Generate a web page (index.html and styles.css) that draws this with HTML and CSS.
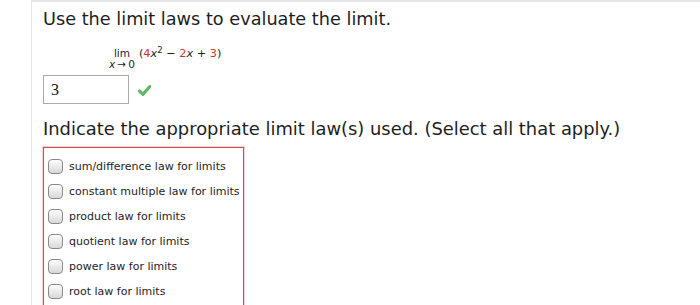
FILE: index.html
```html
<!DOCTYPE html>
<html>
<head>
<meta charset="utf-8">
<link rel="stylesheet" href="styles.css">
</head>
<body>
<div class="page">
  <div class="gutter"></div>
  <div class="main">
    <h1 class="q">Use the limit laws to evaluate the limit.</h1>
    <div class="expr">
      <div class="lim">
        <span class="limword">lim</span>
        <span class="limsub"><i>x</i>&thinsp;→&thinsp;0</span>
      </div>
      <div class="body">(<span class="red">4</span><i>x</i><sup>2</sup> &minus; <span class="red">2</span><i>x</i> + <span class="red">3</span>)</div>
    </div>
    <div class="answer">
      <div class="inp">3</div>
      <svg class="check" width="13" height="11" viewBox="0 0 13 11"><path d="M1.5 6 L5 9.3 L11.8 1.5" fill="none" stroke="#62b862" stroke-width="3.2" stroke-linejoin="round" stroke-linecap="round"/></svg>
    </div>
    <h2 class="q2">Indicate the appropriate limit law(s) used. (Select all that apply.)</h2>
    <div class="opts">
      <div class="opt"><span class="cb"></span><span>sum/difference law for limits</span></div>
      <div class="opt"><span class="cb"></span><span>constant multiple law for limits</span></div>
      <div class="opt"><span class="cb"></span><span>product law for limits</span></div>
      <div class="opt"><span class="cb"></span><span>quotient law for limits</span></div>
      <div class="opt"><span class="cb"></span><span>power law for limits</span></div>
      <div class="opt"><span class="cb"></span><span>root law for limits</span></div>
    </div>
  </div>
</div>
</body>
</html>
```

FILE: styles.css
```css
html, body { margin: 0; padding: 0; background: #fff; }
body { font-family: "DejaVu Sans", Verdana, sans-serif; color: #1e1e1e; width: 700px; height: 305px; overflow: hidden; }
.page { display: flex; height: 305px; }
.gutter { width: 31px; flex: none; border-right: 1px solid #e6e6e6; }
.main { flex: 1; border-top: 2px solid #e6e6e6; padding-left: 11px; }
.q { font-size: 17.7px; font-weight: normal; margin: 6px 0 0 0; line-height: 22px; }
.expr { display: flex; align-items: flex-start; margin: 18px 0 0 66px; }
.lim { display: flex; flex-direction: column; align-items: center; line-height: 11px; font-size: 10.5px; }
.limsub { font-size: 10.5px; }
.limsub i { font-style: italic; }
.body { margin-left: 4px; line-height: 11px; font-size: 11.3px; }
.body sup { font-size: 8.5px; line-height: 0; vertical-align: 4px; }
.red { color: #c33; }
.answer { display: flex; align-items: center; margin-top: 5px; }
.inp { width: 77px; height: 27px; border: 1px solid #aaa; font-family: "Liberation Serif", "Times New Roman", serif; font-size: 16px; line-height: 27px; padding-left: 7px; color: #111; }
.check { margin-left: 9px; margin-top: 2px; }
.q2 { font-size: 17.9px; font-weight: normal; margin: 14px 0 0 0; line-height: 22px; }
.opts { box-sizing: border-box; width: 201px; border: 1px solid #d44a52; box-shadow: 0 0 0 1px rgba(230, 120, 130, 0.35); margin-top: 7px; padding: 6px 0 10px 4px; }
.opt { display: flex; align-items: center; height: 25px; font-size: 11px; }
.cb { width: 13px; height: 13px; border: 1px solid #8a8a8a; border-radius: 4px; background: linear-gradient(#fdfdfd, #d8d8d8); margin-right: 6px; flex: none; }
```
